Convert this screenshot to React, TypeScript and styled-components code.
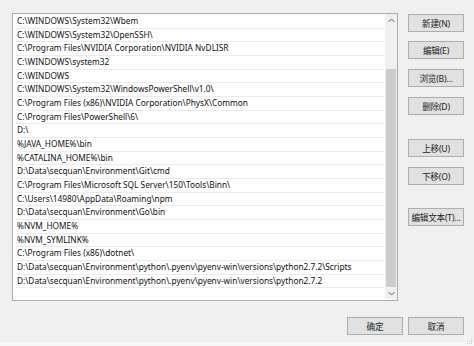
import React from "react";
import styled, { createGlobalStyle } from "styled-components";

const GlobalStyle = createGlobalStyle`
  html, body {
    margin: 0;
    padding: 0;
    background: #f0f0f0;
  }
  body {
    font-family: "Noto Sans", "Noto Sans CJK SC", sans-serif;
  }
`;

const paths = [
    "C:\\WINDOWS\\System32\\Wbem",
    "C:\\WINDOWS\\System32\\OpenSSH\\",
    "C:\\Program Files\\NVIDIA Corporation\\NVIDIA NvDLISR",
    "C:\\WINDOWS\\system32",
    "C:\\WINDOWS",
    "C:\\WINDOWS\\System32\\WindowsPowerShell\\v1.0\\",
    "C:\\Program Files (x86)\\NVIDIA Corporation\\PhysX\\Common",
    "C:\\Program Files\\PowerShell\\6\\",
    "D:\\",
    "%JAVA_HOME%\\bin",
    "%CATALINA_HOME%\\bin",
    "D:\\Data\\secquan\\Environment\\Git\\cmd",
    "C:\\Program Files\\Microsoft SQL Server\\150\\Tools\\Binn\\",
    "C:\\Users\\14980\\AppData\\Roaming\\npm",
    "D:\\Data\\secquan\\Environment\\Go\\bin",
    "%NVM_HOME%",
    "%NVM_SYMLINK%",
    "C:\\Program Files (x86)\\dotnet\\",
    "D:\\Data\\secquan\\Environment\\python\\.pyenv\\pyenv-win\\versions\\python2.7.2\\Scripts",
    "D:\\Data\\secquan\\Environment\\python\\.pyenv\\pyenv-win\\versions\\python2.7.2",
];

const sideButtons = [
    { label: "新建(N)", gap: 0 },
    { label: "编辑(E)", gap: 9 },
    { label: "浏览(B)...", gap: 10 },
    { label: "删除(D)", gap: 10 },
    { label: "上移(U)", gap: 24 },
    { label: "下移(O)", gap: 10 },
    { label: "编辑文本(T)...", gap: 23 },
];

const App = () => {
    return (
        <Dialog>
            <GlobalStyle />
            <Body>
                <ListBox>
                    <Rows>
                        {paths.map((p) => (
                            <Row key={p}>{p}</Row>
                        ))}
                    </Rows>
                    <ScrollBar>
                        <Arrow>
                            <svg width="7" height="5" viewBox="0 0 7 5">
                                <path d="M0.5 4 L3.5 1 L6.5 4" fill="none" stroke="#606060" strokeWidth="1" />
                            </svg>
                        </Arrow>
                        <Track>
                            <Thumb />
                        </Track>
                        <Arrow>
                            <svg width="7" height="5" viewBox="0 0 7 5">
                                <path d="M0.5 1 L3.5 4 L6.5 1" fill="none" stroke="#606060" strokeWidth="1" />
                            </svg>
                        </Arrow>
                    </ScrollBar>
                </ListBox>
                <SideColumn>
                    {sideButtons.map((b) => (
                        <Button key={b.label} $gap={b.gap}>{b.label}</Button>
                    ))}
                </SideColumn>
            </Body>
            <Footer>
                <Button>确定</Button>
                <Button>取消</Button>
            </Footer>
            <BottomEdge />
            <Grip>
                <svg width="6" height="6" viewBox="0 0 6 6">
                    <rect x="4" y="0" width="1" height="1" fill="#c4c4c4" />
                    <rect x="2" y="2" width="1" height="1" fill="#c4c4c4" />
                    <rect x="4" y="2" width="1" height="1" fill="#c4c4c4" />
                    <rect x="0" y="4" width="1" height="1" fill="#c4c4c4" />
                    <rect x="2" y="4" width="1" height="1" fill="#c4c4c4" />
                    <rect x="4" y="4" width="1" height="1" fill="#c4c4c4" />
                </svg>
            </Grip>
        </Dialog>
    );
};

export default App;

const Dialog = styled.div`
    position: relative;
    width: 474px;
    height: 346px;
    box-sizing: border-box;
    background: #f0f0f0;
    padding: 13px 10px 0 12px;
    display: flex;
    flex-direction: column;
    overflow: hidden;
`;

const Body = styled.div`
    display: flex;
    align-items: flex-start;
    gap: 10px;
`;

const ListBox = styled.div`
    width: 387px;
    height: 288px;
    box-sizing: border-box;
    border: 1px solid #acacac;
    background: #ffffff;
    display: flex;
    padding: 1px 0 0 3px;
`;

const Rows = styled.div`
    flex: 1;
    display: flex;
    flex-direction: column;
    overflow: hidden;
    margin-right: 1px;
`;

const Row = styled.div`
    height: 13.68px;
    box-sizing: border-box;
    border-bottom: 1px solid #ececec;
    padding-left: 1px;
    font-size: 8.3px;
    line-height: 12.68px;
    color: #111111;
    white-space: nowrap;
    overflow: hidden;
`;

const ScrollBar = styled.div`
    width: 12px;
    height: 100%;
    margin-top: -1px;
    margin-bottom: -1px;
    background: #f0f0f0;
    display: flex;
    flex-direction: column;
`;

const Arrow = styled.div`
    height: 12px;
    display: flex;
    align-items: center;
    justify-content: center;
`;

const Track = styled.div`
    flex: 1;
    display: flex;
    flex-direction: column;
    justify-content: flex-end;
    padding: 0 1px;
`;

const Thumb = styled.div`
    height: 218px;
    background: #cdcdcd;
`;

const SideColumn = styled.div`
    display: flex;
    flex-direction: column;
    padding-top: 1px;
`;

const Button = styled.div<{ $gap?: number }>`
    width: 56px;
    height: 18px;
    box-sizing: border-box;
    margin-top: ${(p) => p.$gap || 0}px;
    border: 1px solid #adadad;
    background: #e1e1e1;
    display: flex;
    align-items: center;
    justify-content: center;
    font-size: 8.6px;
    color: #222222;
    white-space: nowrap;
    letter-spacing: -0.2px;
`;

const Footer = styled.div`
    display: flex;
    justify-content: flex-end;
    gap: 5px;
    margin-top: 16px;
`;

const BottomEdge = styled.div`
    margin: auto -10px 0 -12px;
    height: 4px;
    background: #f7f7f7;
`;

const Grip = styled.div`
    position: absolute;
    right: 1px;
    bottom: 1px;
    width: 6px;
    height: 6px;
    display: flex;
`;
